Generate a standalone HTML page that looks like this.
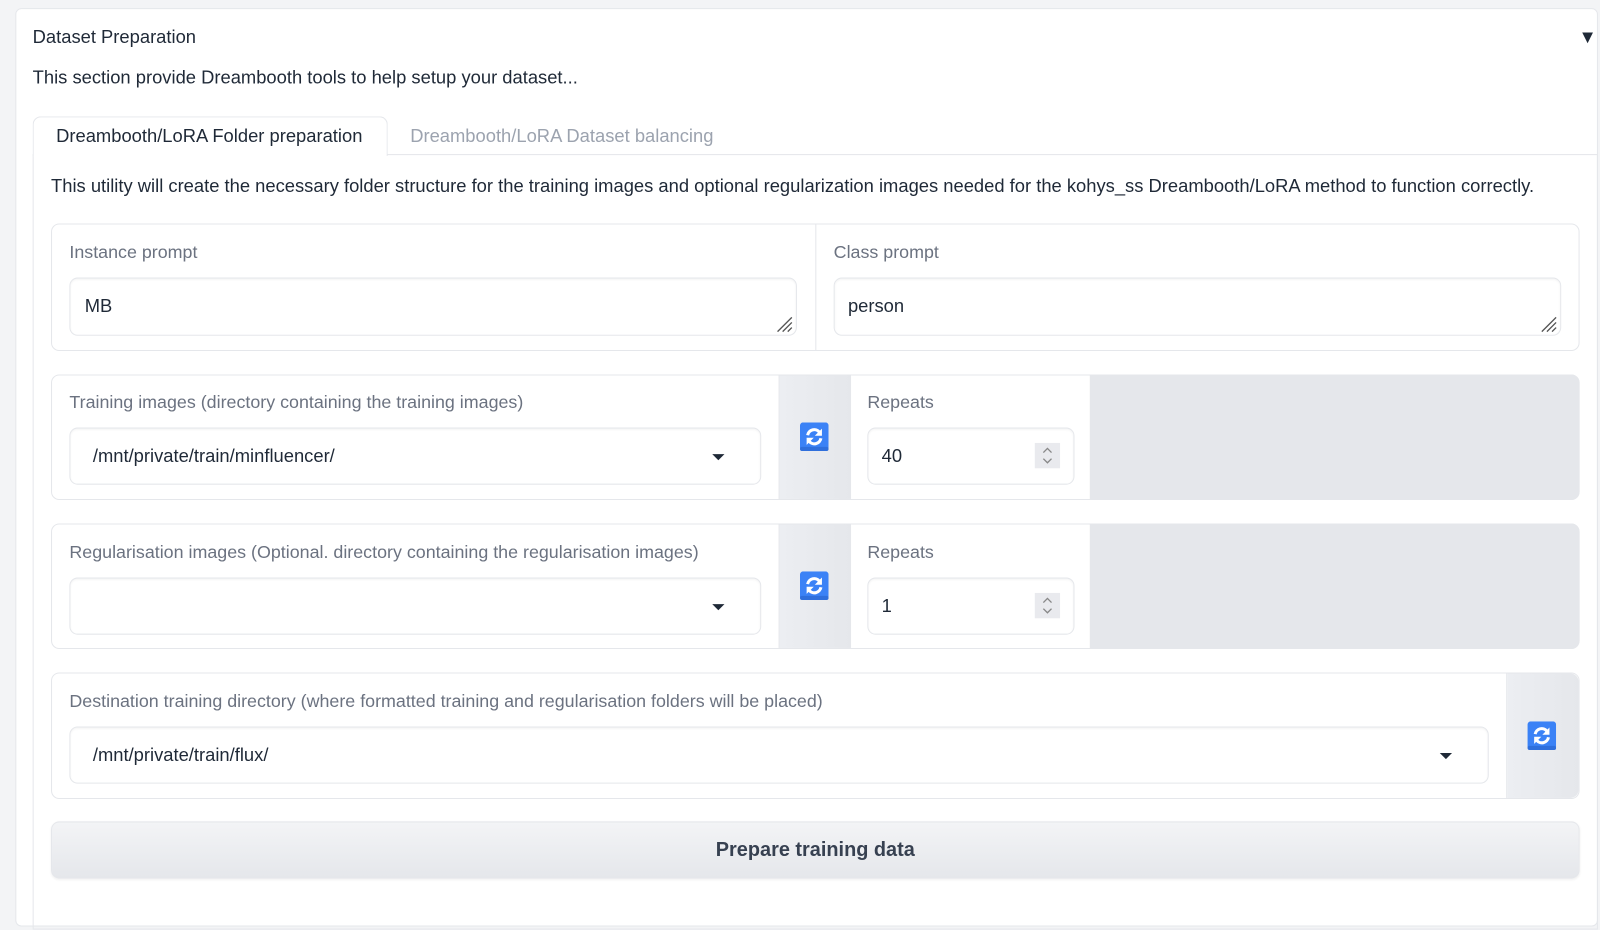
<!DOCTYPE html>
<html><head><meta charset="utf-8"><style>
*{box-sizing:border-box;margin:0;padding:0}
body{width:1600px;height:892px;overflow:hidden;background:#f3f4f6;font-family:"Liberation Sans",sans-serif;color:#1f2937;position:relative}
#w{position:absolute;left:0;top:0;width:1568px;height:880px;transform:scale(1.0204);transform-origin:0 0}
.a{position:absolute}
.t{white-space:nowrap;font-size:18px;line-height:24px}
.lbl{color:#6b7280;font-size:17.5px;line-height:24px;white-space:nowrap}
.box{position:absolute;border:1px solid #e5e7eb;border-radius:8px;background:#fff;overflow:hidden}
.inp{position:absolute;border:1px solid #e5e7eb;border-radius:8px;background:#fff;box-shadow:inset 0 1px 2px rgba(0,0,0,.05)}
.grey{position:absolute;background:linear-gradient(90deg,#eceef2,#e5e7eb)}
.arr{position:absolute;width:0;height:0;border-left:6px solid transparent;border-right:6px solid transparent;border-top:6px solid #1f2937}
</style></head><body>
<svg width="0" height="0" style="position:absolute"><defs>
<symbol id="rf" viewBox="0 0 28 28"><rect width="28" height="28" rx="3" fill="#3b82f6"/><rect y="24" width="28" height="4" rx="2" fill="#2f6fdc"/>
<path d="M7.5 12.5A6.5 6.5 0 0 1 19 9.5" stroke="#fff" stroke-width="3" fill="none"/><path d="M21.5 6v7h-7z" fill="#fff"/>
<path d="M20.5 15.5A6.5 6.5 0 0 1 9 18.5" stroke="#fff" stroke-width="3" fill="none"/><path d="M6.5 22v-7h7z" fill="#fff"/></symbol>
<symbol id="sp" viewBox="0 0 25 25"><rect width="25" height="25" fill="#e9eaee"/><path d="M8.5 9.5l4-4 4 4M8.5 15.5l4 4 4-4" stroke="#888" stroke-width="1.3" fill="none"/></symbol>
</defs></svg>
<div id="w">
<div class="a" style="left:15px;top:8px;width:1551px;height:900px;background:#fff;border:1px solid #e5e7eb;border-radius:6px"></div>
<div class="a t" style="left:32px;top:24px">Dataset Preparation</div>
<div class="a" style="left:1547px;top:26px;font-size:18px;line-height:20px">▼</div>
<div class="a t" style="left:32px;top:64px">This section provide Dreambooth tools to help setup your dataset...</div>
<div class="a" style="left:32px;top:151px;width:1534px;height:760px;border:1px solid #e5e7eb"></div>
<div class="a" style="left:32px;top:114px;width:348px;height:39px;background:#fff;border:1px solid #e5e7eb;border-bottom:none;border-radius:8px 8px 0 0"></div>
<div class="a t" style="left:55px;top:121px">Dreambooth/LoRA Folder preparation</div>
<div class="a t" style="left:402px;top:121px;color:#9ca3af">Dreambooth/LoRA Dataset balancing</div>
<div class="a t" style="left:50px;top:170px;font-size:18px">This utility will create the necessary folder structure for the training images and optional regularization images needed for the kohys_ss Dreambooth/LoRA method to function correctly.</div>
<div class="box" style="left:50px;top:219px;width:1498px;height:125px"></div>
<div class="a" style="left:799px;top:220px;width:1px;height:123px;background:#e5e7eb"></div>
<div class="a lbl" style="left:68px;top:235px">Instance prompt</div>
<div class="a lbl" style="left:817px;top:235px">Class prompt</div>
<div class="inp" style="left:68px;top:272px;width:713px;height:57px"></div>
<div class="a t" style="left:83px;top:288px">MB</div>
<div class="inp" style="left:817px;top:272px;width:713px;height:57px"></div>
<div class="a t" style="left:831px;top:288px">person</div>
<svg class="a" style="left:758px;top:307px" width="20" height="20"><path d="M18 4L4 18M18 9L9 18M18 14L14 18" stroke="#555" stroke-width="1.3"/></svg>
<svg class="a" style="left:1507px;top:307px" width="20" height="20"><path d="M18 4L4 18M18 9L9 18M18 14L14 18" stroke="#555" stroke-width="1.3"/></svg>
<div class="box" style="left:50px;top:367px;width:1498px;height:123px"></div>
<div class="grey" style="left:763px;top:368px;width:71px;height:121px;border-left:1px solid #e5e7eb"></div>
<div class="grey" style="left:1068px;top:367px;width:480px;height:123px;border-radius:0 8px 8px 0;background:#e5e7eb"></div>
<div class="a lbl" style="left:68px;top:382px">Training images (directory containing the training images)</div>
<div class="inp" style="left:68px;top:419px;width:678px;height:56px"></div>
<div class="a t" style="left:91px;top:435px">/mnt/private/train/minfluencer/</div>
<div class="arr" style="left:698px;top:445px"></div>
<svg class="a" style="left:784px;top:414px" width="28" height="28"><use href="#rf"/></svg>
<div class="a lbl" style="left:850px;top:382px">Repeats</div>
<div class="inp" style="left:850px;top:419px;width:203px;height:56px"></div>
<div class="a t" style="left:864px;top:435px">40</div>
<svg class="a" style="left:1014px;top:434px" width="25" height="25"><use href="#sp"/></svg>
<div class="box" style="left:50px;top:513px;width:1498px;height:123px"></div>
<div class="grey" style="left:763px;top:514px;width:71px;height:121px;border-left:1px solid #e5e7eb"></div>
<div class="grey" style="left:1068px;top:513px;width:480px;height:123px;border-radius:0 8px 8px 0;background:#e5e7eb"></div>
<div class="a lbl" style="left:68px;top:529px">Regularisation images (Optional. directory containing the regularisation images)</div>
<div class="inp" style="left:68px;top:566px;width:678px;height:56px"></div>
<div class="arr" style="left:698px;top:592px"></div>
<svg class="a" style="left:784px;top:560px" width="28" height="28"><use href="#rf"/></svg>
<div class="a lbl" style="left:850px;top:529px">Repeats</div>
<div class="inp" style="left:850px;top:566px;width:203px;height:56px"></div>
<div class="a t" style="left:864px;top:582px">1</div>
<svg class="a" style="left:1014px;top:581px" width="25" height="25"><use href="#sp"/></svg>
<div class="box" style="left:50px;top:659px;width:1498px;height:124px"></div>
<div class="grey" style="left:1476px;top:660px;width:71px;height:122px;border-left:1px solid #e5e7eb;border-radius:0 8px 8px 0"></div>
<div class="a lbl" style="left:68px;top:675px">Destination training directory (where formatted training and regularisation folders will be placed)</div>
<div class="inp" style="left:68px;top:712px;width:1391px;height:56px"></div>
<div class="a t" style="left:91px;top:728px">/mnt/private/train/flux/</div>
<div class="arr" style="left:1411px;top:738px"></div>
<svg class="a" style="left:1497px;top:707px" width="28" height="28"><use href="#rf"/></svg>
<div class="a" style="left:50px;top:805px;width:1498px;height:56px;border:1px solid #e5e7eb;border-radius:8px;background:linear-gradient(180deg,#f3f4f6,#e5e7eb);box-shadow:0 1px 2px rgba(0,0,0,.06)"></div>
<div class="a" style="left:50px;top:805px;width:1498px;height:56px;line-height:56px;text-align:center;font-weight:bold;font-size:19.5px;color:#374151">Prepare training data</div>
</div>
</body></html>
